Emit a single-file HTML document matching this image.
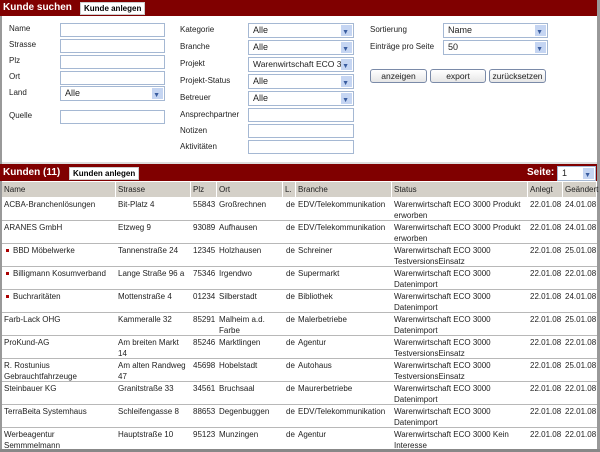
<!DOCTYPE html>
<html><head><meta charset="utf-8"><style>
*{margin:0;padding:0;box-sizing:border-box}
body{width:600px;height:452px;background:#fff;font-family:"Liberation Sans",Arial,sans-serif;font-size:8px;color:#222;position:relative;overflow:hidden}
.a{position:absolute;white-space:nowrap}
.bar{position:absolute;background:#800000;color:#fff;font-weight:bold;font-size:10px}
.btn{position:absolute;background:#fff;color:#000;border:1px solid #ccc;font-size:8px;font-weight:bold;padding:0 3px;line-height:11px}
.in{position:absolute;border:1px solid #a5b8d3;background:#fff;height:14px}
.sel{position:absolute;border:1px solid #a5b8d3;background:#fff;height:15px;font-size:9px;line-height:13px;padding-left:4px;overflow:hidden;white-space:nowrap}
.sel:after{content:"";position:absolute;right:1px;top:1px;width:11px;height:11px;background:#c5d5f2}
.sel i{position:absolute;right:4px;top:2px;font-style:normal;font-size:7px;color:#3a5da0;z-index:2}
.b{position:absolute;border:1px solid #7a8aa8;border-radius:3px;background:linear-gradient(#fff,#e6e6e6);height:14px;font-size:8.5px;text-align:center;line-height:12px}
.th{position:absolute;top:182px;height:15px;background:#d4d0c8;border-right:1px solid #fff;line-height:15px;padding-left:2px;font-size:8px}
.row{position:absolute;left:2px;width:595px;height:1px;background:#b8b8b8}
.c{position:absolute;line-height:11px;font-size:8px;white-space:nowrap}
.dot{display:inline-block;width:3px;height:3px;background:#a00;margin:0 4px 1px 2px;vertical-align:middle}
</style></head><body>
<div class="a" style="left:0;top:0;width:2px;height:452px;background:#999"></div>
<div class="a" style="left:597px;top:0;width:3px;height:452px;background:#999"></div>
<div class="a" style="left:2px;top:162px;width:595px;height:2px;background:#ddd"></div>
<div class="a" style="left:0;top:449px;width:600px;height:3px;background:#888"></div>

<div class="bar" style="left:0;top:0;width:597px;height:16px"><span class="a" style="left:3px;top:2px">Kunde suchen</span></div>
<div class="btn" style="left:80px;top:2px">Kunde anlegen</div>

<div class="a" style="left:9px;top:24px">Name</div>
<div class="a" style="left:9px;top:40px">Strasse</div>
<div class="a" style="left:9px;top:56px">Plz</div>
<div class="a" style="left:9px;top:72px">Ort</div>
<div class="a" style="left:9px;top:88px">Land</div>
<div class="a" style="left:9px;top:111px">Quelle</div>
<div class="in" style="left:60px;top:23px;width:105px"></div>
<div class="in" style="left:60px;top:39px;width:105px"></div>
<div class="in" style="left:60px;top:55px;width:105px"></div>
<div class="in" style="left:60px;top:71px;width:105px"></div>
<div class="sel" style="left:60px;top:86px;width:105px">Alle<i>▼</i></div>
<div class="in" style="left:60px;top:110px;width:105px"></div>

<div class="a" style="left:180px;top:25px">Kategorie</div>
<div class="a" style="left:180px;top:42px">Branche</div>
<div class="a" style="left:180px;top:59px">Projekt</div>
<div class="a" style="left:180px;top:76px">Projekt-Status</div>
<div class="a" style="left:180px;top:93px">Betreuer</div>
<div class="a" style="left:180px;top:110px">Ansprechpartner</div>
<div class="a" style="left:180px;top:126px">Notizen</div>
<div class="a" style="left:180px;top:142px">Aktivitäten</div>
<div class="sel" style="left:248px;top:23px;width:106px">Alle<i>▼</i></div>
<div class="sel" style="left:248px;top:40px;width:106px">Alle<i>▼</i></div>
<div class="sel" style="left:248px;top:57px;width:106px;font-size:8.5px">Warenwirtschaft ECO 3<i>▼</i></div>
<div class="sel" style="left:248px;top:74px;width:106px">Alle<i>▼</i></div>
<div class="sel" style="left:248px;top:91px;width:106px">Alle<i>▼</i></div>
<div class="in" style="left:248px;top:108px;width:106px"></div>
<div class="in" style="left:248px;top:124px;width:106px"></div>
<div class="in" style="left:248px;top:140px;width:106px"></div>

<div class="a" style="left:370px;top:25px">Sortierung</div>
<div class="a" style="left:370px;top:42px">Einträge pro Seite</div>
<div class="sel" style="left:443px;top:23px;width:105px">Name<i>▼</i></div>
<div class="sel" style="left:443px;top:40px;width:105px">50<i>▼</i></div>
<div class="b" style="left:370px;top:69px;width:57px">anzeigen</div>
<div class="b" style="left:430px;top:69px;width:56px">export</div>
<div class="b" style="left:489px;top:69px;width:57px">zurücksetzen</div>

<div class="bar" style="left:0;top:164px;width:597px;height:17px"><span class="a" style="left:3px;top:3px">Kunden (11)</span><span class="a" style="left:527px;top:3px">Seite:</span></div>
<div class="btn" style="left:69px;top:167px">Kunden anlegen</div>
<div class="sel" style="left:557px;top:166px;width:39px;font-size:9px">1<i>▼</i></div>

<div class="th" style="left:2px;width:114px">Name</div>
<div class="th" style="left:116px;width:75px">Strasse</div>
<div class="th" style="left:191px;width:26px">Plz</div>
<div class="th" style="left:217px;width:66px">Ort</div>
<div class="th" style="left:283px;width:13px">L.</div>
<div class="th" style="left:296px;width:96px">Branche</div>
<div class="th" style="left:392px;width:136px">Status</div>
<div class="th" style="left:528px;width:35px">Anlegt</div>
<div class="th" style="left:563px;width:34px">Geändert</div>

<div id="rows"></div>
<script>
var d=[
["ACBA-Branchenlösungen","Bit-Platz 4","55843","Großrechnen","EDV/Telekommunikation","Warenwirtschaft ECO 3000 Produkt<br>erworben","24.01.08",0],
["ARANES GmbH","Etzweg 9","93089","Aufhausen","EDV/Telekommunikation","Warenwirtschaft ECO 3000 Produkt<br>erworben","24.01.08",0],
["BBD Möbelwerke","Tannenstraße 24","12345","Holzhausen","Schreiner","Warenwirtschaft ECO 3000<br>TestversionsEinsatz","25.01.08",1],
["Billigmann Kosumverband","Lange Straße 96 a","75346","Irgendwo","Supermarkt","Warenwirtschaft ECO 3000<br>Datenimport","22.01.08",1],
["Buchraritäten","Mottenstraße 4","01234","Silberstadt","Bibliothek","Warenwirtschaft ECO 3000<br>Datenimport","24.01.08",1],
["Farb-Lack OHG","Kammeralle 32","85291","Malheim a.d.<br>Farbe","Malerbetriebe","Warenwirtschaft ECO 3000<br>Datenimport","25.01.08",0],
["ProKund-AG","Am breiten Markt<br>14","85246","Marktlingen","Agentur","Warenwirtschaft ECO 3000<br>TestversionsEinsatz","22.01.08",0],
["R. Rostunius<br>Gebrauchtfahrzeuge","Am alten Randweg<br>47","45698","Hobelstadt","Autohaus","Warenwirtschaft ECO 3000<br>TestversionsEinsatz","25.01.08",0],
["Steinbauer KG","Granitstraße 33","34561","Bruchsaal","Maurerbetriebe","Warenwirtschaft ECO 3000<br>Datenimport","22.01.08",0],
["TerraBeita Systemhaus","Schleifengasse 8","88653","Degenbuggen","EDV/Telekommunikation","Warenwirtschaft ECO 3000<br>Datenimport","22.01.08",0],
["Werbeagentur<br>Semmmelmann","Hauptstraße 10","95123","Munzingen","Agentur","Warenwirtschaft ECO 3000 Kein<br>Interesse","22.01.08",0]];
var h="";
d.forEach(function(r,i){var y=199+i*23;
h+='<div class="c" style="left:4px;top:'+y+'px">'+(r[7]?'<span class="dot"></span>':'')+r[0]+'</div>';
h+='<div class="c" style="left:118px;top:'+y+'px">'+r[1]+'</div>';
h+='<div class="c" style="left:193px;top:'+y+'px">'+r[2]+'</div>';
h+='<div class="c" style="left:219px;top:'+y+'px">'+r[3]+'</div>';
h+='<div class="c" style="left:286px;top:'+y+'px">de</div>';
h+='<div class="c" style="left:298px;top:'+y+'px">'+r[4]+'</div>';
h+='<div class="c" style="left:394px;top:'+y+'px">'+r[5]+'</div>';
h+='<div class="c" style="left:530px;top:'+y+'px">22.01.08</div>';
h+='<div class="c" style="left:565px;top:'+y+'px">'+r[6]+'</div>';
if(i<10)h+='<div class="row" style="top:'+(220+i*23)+'px"></div>';});
document.getElementById("rows").innerHTML=h;
</script>
</body></html>
